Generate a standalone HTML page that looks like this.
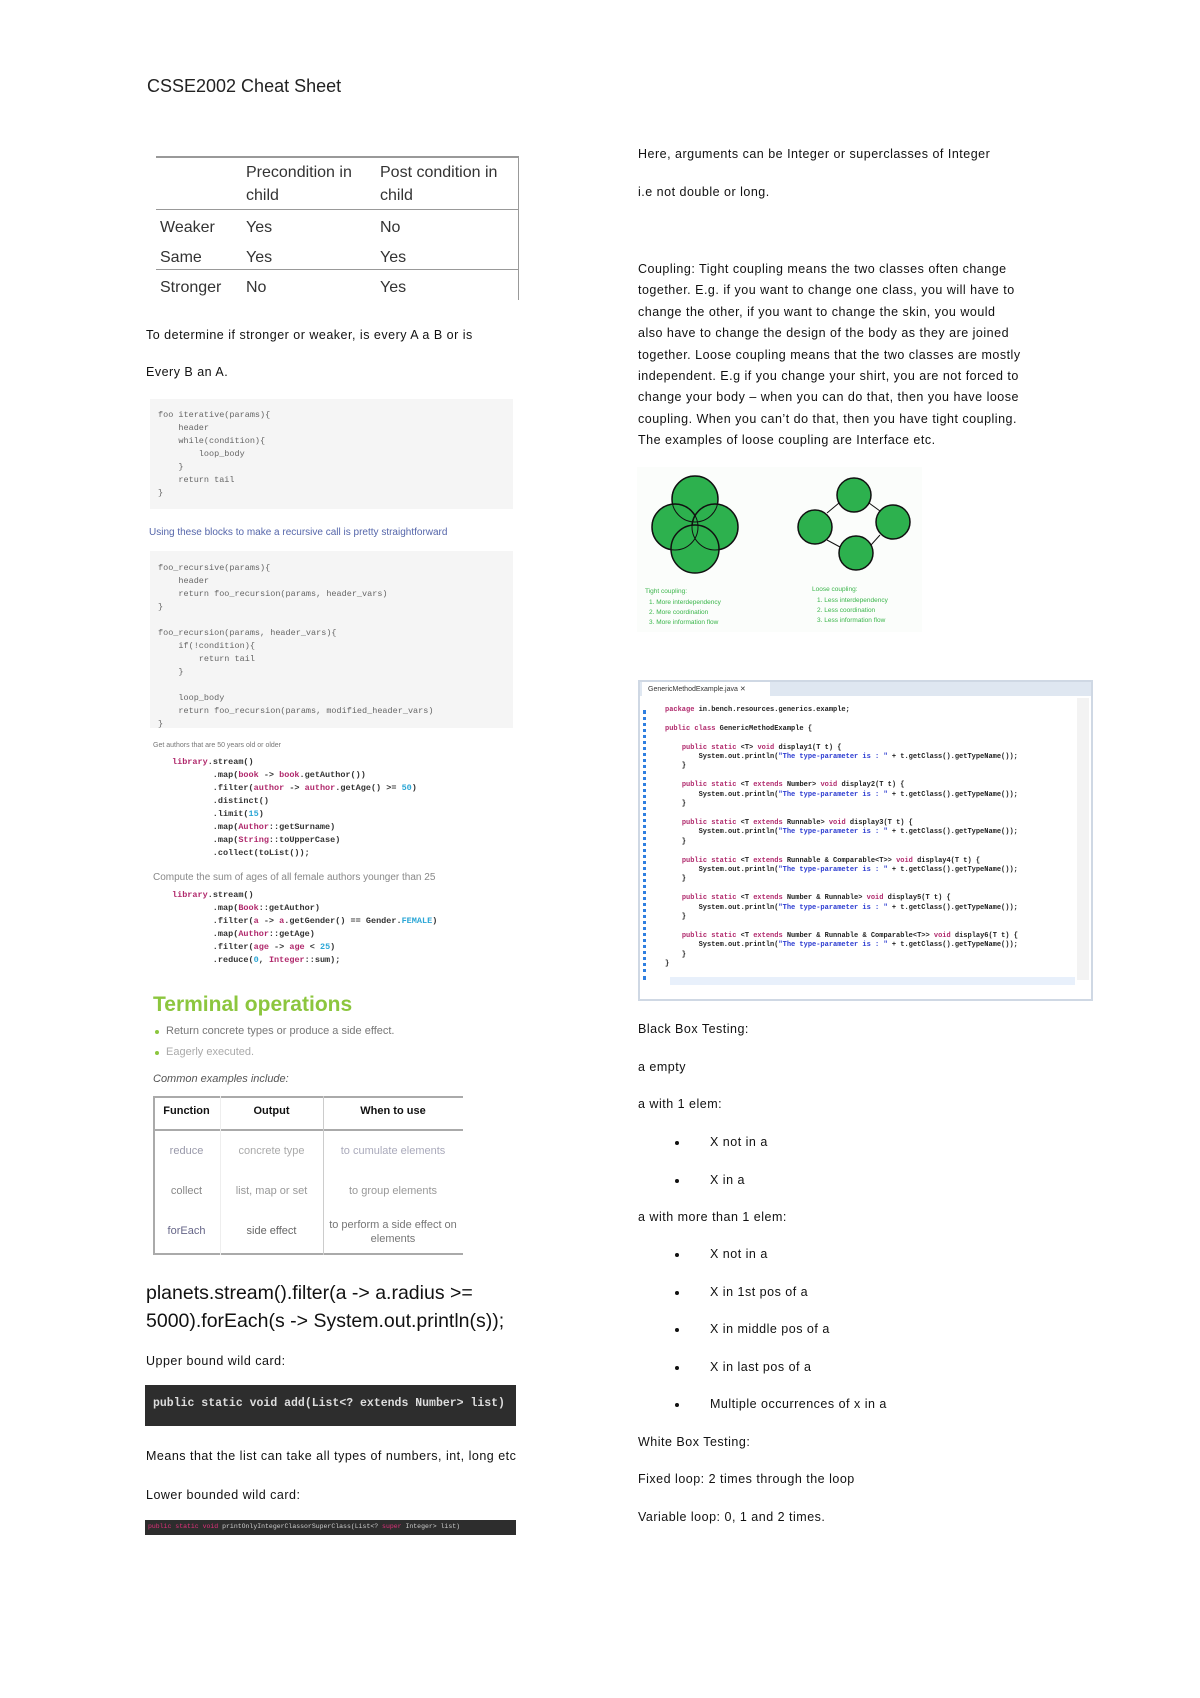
<!DOCTYPE html>
<html><head><meta charset="utf-8"><style>
*{margin:0;padding:0;box-sizing:border-box}
body{width:1200px;height:1698px;background:#fff;position:relative;font-family:"Liberation Sans",sans-serif;color:#111;overflow:hidden}
.a{position:absolute;white-space:nowrap}
.t{font-size:12.5px;letter-spacing:0.5px}
.mono{font-family:"Liberation Mono",monospace}
.code{position:absolute;background:#f5f5f5;font-family:"Liberation Mono",monospace;font-size:8.5px;color:#666;line-height:13px;white-space:pre}
.sc{font-family:"Liberation Mono",monospace;font-size:8.5px;font-weight:bold;color:#333;line-height:13px;white-space:pre;position:absolute}
.k{color:#b0296c}.n{color:#2aa6d6}
.b{position:absolute;width:4px;height:4px;border-radius:50%;background:#111}
</style></head><body>
<div class="a" style="left:147px;top:76px;font-size:18px;color:#222">CSSE2002 Cheat Sheet</div>

<div class="a" style="left:156px;top:156px;width:363px;border-top:2px solid #999"></div>
<div class="a" style="left:156px;top:209px;width:363px;border-top:1px solid #999"></div>
<div class="a" style="left:156px;top:269px;width:363px;border-top:1px solid #999"></div>
<div class="a" style="left:518px;top:156px;height:144px;border-left:1px solid #999"></div>
<div style="position:absolute;left:160px;top:161px;font-size:16px;color:#333;line-height:23px">
<div class="a" style="left:86px;top:0">Precondition in<br>child</div>
<div class="a" style="left:220px;top:0">Post condition in<br>child</div>
<div class="a" style="left:0;top:55px">Weaker</div><div class="a" style="left:86px;top:55px">Yes</div><div class="a" style="left:220px;top:55px">No</div>
<div class="a" style="left:0;top:85px">Same</div><div class="a" style="left:86px;top:85px">Yes</div><div class="a" style="left:220px;top:85px">Yes</div>
<div class="a" style="left:0;top:115px">Stronger</div><div class="a" style="left:86px;top:115px">No</div><div class="a" style="left:220px;top:115px">Yes</div>
</div>

<div class="a t" style="left:146px;top:328px">To determine if stronger or weaker, is every A a B or is</div>
<div class="a t" style="left:146px;top:365px">Every B an A.</div>

<div class="code" style="left:150px;top:399px;width:363px;height:110px;padding:10px 8px">foo iterative(params){
    header
    while(condition){
        loop_body
    }
    return tail
}</div>
<div class="a" style="left:149px;top:527px;font-size:10px;color:#5566aa">Using these blocks to make a recursive call is pretty straightforward</div>
<div class="code" style="left:150px;top:551px;width:363px;height:177px;padding:11px 8px">foo_recursive(params){
    header
    return foo_recursion(params, header_vars)
}

foo_recursion(params, header_vars){
    if(!condition){
        return tail
    }

    loop_body
    return foo_recursion(params, modified_header_vars)
}</div>
<div class="a" style="left:153px;top:742px;font-size:7px;color:#777">Get authors that are 50 years old or older</div>
<div class="sc" style="left:172px;top:756px"><span class="k">library</span>.stream()
        .map(<span class="k">book</span> -> <span class="k">book</span>.getAuthor())
        .filter(<span class="k">author</span> -> <span class="k">author</span>.getAge() >= <span class="n">50</span>)
        .distinct()
        .limit(<span class="n">15</span>)
        .map(<span class="k">Author</span>::getSurname)
        .map(<span class="k">String</span>::toUpperCase)
        .collect(toList());</div>
<div class="a" style="left:153px;top:872px;font-size:10px;color:#888">Compute the sum of ages of all female authors younger than 25</div>
<div class="sc" style="left:172px;top:889px"><span class="k">library</span>.stream()
        .map(<span class="k">Book</span>::getAuthor)
        .filter(<span class="k">a</span> -> <span class="k">a</span>.getGender() == Gender.<span class="n">FEMALE</span>)
        .map(<span class="k">Author</span>::getAge)
        .filter(<span class="k">age</span> -> <span class="k">age</span> &lt; <span class="n">25</span>)
        .reduce(<span class="n">0</span>, <span class="k">Integer</span>::sum);</div>

<div class="a" style="left:153px;top:993px;font-size:21px;font-weight:bold;color:#8cc63e">Terminal operations</div>
<div class="a" style="left:155px;top:1030px;width:4px;height:4px;border-radius:50%;background:#8cc63e"></div>
<div class="a" style="left:155px;top:1051px;width:4px;height:4px;border-radius:50%;background:#8cc63e"></div>
<div class="a" style="left:166px;top:1025px;font-size:11px;color:#777">Return concrete types or produce a side effect.</div>
<div class="a" style="left:166px;top:1046px;font-size:11px;color:#aaa">Eagerly executed.</div>
<div class="a" style="left:153px;top:1073px;font-size:11px;font-style:italic;color:#555">Common examples include:</div>
<div class="a" style="left:153px;top:1096px;width:310px;height:159px;border:2px solid #aaa;border-right:none"></div>
<div class="a" style="left:153px;top:1129px;width:310px;border-top:2px solid #aaa"></div>
<div class="a" style="left:323px;top:1096px;height:159px;border-left:1px solid #ccc"></div>
<div class="a" style="left:220px;top:1096px;height:159px;border-left:1px solid #eee"></div>
<div style="position:absolute;left:153px;top:1105px;font-size:11px;text-align:center">
<div class="a" style="left:0;width:67px;font-weight:bold;text-align:center">Function</div>
<div class="a" style="left:67px;width:103px;font-weight:bold;text-align:center">Output</div>
<div class="a" style="left:170px;width:140px;font-weight:bold;text-align:center">When to use</div>
<div class="a" style="left:0;top:40px;width:67px;text-align:center;color:#99a">reduce</div>
<div class="a" style="left:67px;top:40px;width:103px;text-align:center;color:#aaa">concrete type</div>
<div class="a" style="left:170px;top:40px;width:140px;text-align:center;color:#aab">to cumulate elements</div>
<div class="a" style="left:0;top:80px;width:67px;text-align:center;color:#888">collect</div>
<div class="a" style="left:67px;top:80px;width:103px;text-align:center;color:#999">list, map or set</div>
<div class="a" style="left:170px;top:80px;width:140px;text-align:center;color:#999">to group elements</div>
<div class="a" style="left:0;top:120px;width:67px;text-align:center;color:#668">forEach</div>
<div class="a" style="left:67px;top:120px;width:103px;text-align:center;color:#666">side effect</div>
<div class="a" style="left:170px;top:113px;width:140px;text-align:center;color:#777;line-height:14px;white-space:normal">to perform a side effect on elements</div>
</div>

<div class="a" style="left:146px;top:1279px;font-size:19.5px;line-height:28px;color:#111">planets.stream().filter(a -&gt; a.radius &gt;=<br>5000).forEach(s -&gt; System.out.println(s));</div>
<div class="a t" style="left:146px;top:1354px">Upper bound wild card:</div>
<div class="a mono" style="left:145px;top:1385px;width:371px;height:41px;background:#2d2d2d;color:#ddd;font-size:11.5px;font-weight:bold;padding:12px 8px">public static void add(List&lt;? extends Number&gt; list)</div>
<div class="a t" style="left:146px;top:1449px">Means that the list can take all types of numbers, int, long etc</div>
<div class="a t" style="left:146px;top:1488px">Lower bounded wild card:</div>
<div class="a mono" style="left:145px;top:1520px;width:371px;height:15px;background:#2d2d2d;color:#ccc;font-size:6.5px;padding:3px 3px;overflow:hidden"><span style="color:#e0307a">public static void</span> printOnlyIntegerClassorSuperClass(List&lt;? <span style="color:#e0307a">super</span> Integer&gt; list)</div>

<div class="a t" style="left:638px;top:147px">Here, arguments can be Integer or superclasses of Integer</div>
<div class="a t" style="left:638px;top:185px">i.e not double or long.</div>
<div class="a t" style="left:638px;top:259px;line-height:21.4px">Coupling: Tight coupling means the two classes often change<br>together. E.g. if you want to change one class, you will have to<br>change the other, if you want to change the skin, you would<br>also have to change the design of the body as they are joined<br>together. Loose coupling means that the two classes are mostly<br>independent. E.g if you change your shirt, you are not forced to<br>change your body – when you can do that, then you have loose<br>coupling. When you can’t do that, then you have tight coupling.<br>The examples of loose coupling are Interface etc.</div>

<svg class="a" style="left:637px;top:467px" width="285" height="165" viewBox="0 0 285 165">
<rect width="285" height="165" fill="#fbfdfb"/>
<g fill="#2db14e" stroke="#111" stroke-width="1.5">
<circle cx="58" cy="32" r="23"/>
<circle cx="38" cy="60" r="23"/>
<circle cx="78" cy="60" r="23"/>
<circle cx="58" cy="82" r="24"/>
<circle cx="217" cy="28" r="17"/>
<circle cx="178" cy="60" r="17"/>
<circle cx="256" cy="55" r="17"/>
<circle cx="219" cy="86" r="17"/>
</g>
<g fill="none" stroke="#111" stroke-width="1"><circle cx="58" cy="32" r="23"/><circle cx="38" cy="60" r="23"/><circle cx="78" cy="60" r="23"/></g>
<g stroke="#111" stroke-width="1"><line x1="202" y1="36" x2="190" y2="46"/><line x1="232" y1="36" x2="243" y2="44"/><line x1="190" y1="73" x2="203" y2="80"/><line x1="243" y1="68" x2="234" y2="78"/></g>
<g font-size="6.5" fill="#3ab54a" font-family="Liberation Sans">
<text x="8" y="126">Tight coupling:</text><text x="12" y="137">1. More interdependency</text><text x="12" y="147">2. More coordination</text><text x="12" y="157">3. More information flow</text>
<text x="175" y="124">Loose coupling:</text><text x="180" y="135">1. Less interdependency</text><text x="180" y="145">2. Less coordination</text><text x="180" y="155">3. Less information flow</text>
</g>
</svg>

<div class="a" style="left:638px;top:680px;width:455px;height:321px;border:2px solid #cfd8e4;background:#fff"></div>
<div class="a" style="left:640px;top:682px;width:451px;height:14px;background:#dfe7f1"></div>
<div class="a" style="left:642px;top:682px;width:128px;height:14px;background:#fff;font-size:7px;color:#333;padding:3px 6px">GenericMethodExample.java ✕</div>
<div class="a" style="left:643px;top:710px;width:4px;height:270px;border-left:3px dotted #2f7fe0"></div>
<div class="a" style="left:1077px;top:698px;width:12px;height:282px;background:#f3f3f3"></div>
<div class="a" style="left:670px;top:977px;width:405px;height:8px;background:#e8f0fb"></div>
<div class="sc" style="left:665px;top:706px;font-size:7px;line-height:9.4px;color:#222"><span class="k">package</span> in.bench.resources.generics.example;

<span class="k">public class</span> GenericMethodExample {

    <span class="k">public static</span> &lt;T&gt; <span class="k">void</span> display1(T t) {
        System.out.println(<span style="color:#2a3ad0">"The type-parameter is : "</span> + t.getClass().getTypeName());
    }

    <span class="k">public static</span> &lt;T <span class="k">extends</span> Number&gt; <span class="k">void</span> display2(T t) {
        System.out.println(<span style="color:#2a3ad0">"The type-parameter is : "</span> + t.getClass().getTypeName());
    }

    <span class="k">public static</span> &lt;T <span class="k">extends</span> Runnable&gt; <span class="k">void</span> display3(T t) {
        System.out.println(<span style="color:#2a3ad0">"The type-parameter is : "</span> + t.getClass().getTypeName());
    }

    <span class="k">public static</span> &lt;T <span class="k">extends</span> Runnable &amp; Comparable&lt;T&gt;&gt; <span class="k">void</span> display4(T t) {
        System.out.println(<span style="color:#2a3ad0">"The type-parameter is : "</span> + t.getClass().getTypeName());
    }

    <span class="k">public static</span> &lt;T <span class="k">extends</span> Number &amp; Runnable&gt; <span class="k">void</span> display5(T t) {
        System.out.println(<span style="color:#2a3ad0">"The type-parameter is : "</span> + t.getClass().getTypeName());
    }

    <span class="k">public static</span> &lt;T <span class="k">extends</span> Number &amp; Runnable &amp; Comparable&lt;T&gt;&gt; <span class="k">void</span> display6(T t) {
        System.out.println(<span style="color:#2a3ad0">"The type-parameter is : "</span> + t.getClass().getTypeName());
    }
}</div>

<div class="a t" style="left:638px;top:1022px">Black Box Testing:</div>
<div class="a t" style="left:638px;top:1060px">a empty</div>
<div class="a t" style="left:638px;top:1097px">a with 1 elem:</div>
<div class="b" style="left:675px;top:1141px"></div><div class="a t" style="left:710px;top:1135px">X not in a</div>
<div class="b" style="left:675px;top:1179px"></div><div class="a t" style="left:710px;top:1173px">X in a</div>
<div class="a t" style="left:638px;top:1210px">a with more than 1 elem:</div>
<div class="b" style="left:675px;top:1253px"></div><div class="a t" style="left:710px;top:1247px">X not in a</div>
<div class="b" style="left:675px;top:1291px"></div><div class="a t" style="left:710px;top:1285px">X in 1st pos of a</div>
<div class="b" style="left:675px;top:1328px"></div><div class="a t" style="left:710px;top:1322px">X in middle pos of a</div>
<div class="b" style="left:675px;top:1366px"></div><div class="a t" style="left:710px;top:1360px">X in last pos of a</div>
<div class="b" style="left:675px;top:1403px"></div><div class="a t" style="left:710px;top:1397px">Multiple occurrences of x in a</div>
<div class="a t" style="left:638px;top:1435px">White Box Testing:</div>
<div class="a t" style="left:638px;top:1472px">Fixed loop: 2 times through the loop</div>
<div class="a t" style="left:638px;top:1510px">Variable loop: 0, 1 and 2 times.</div>
</body></html>
